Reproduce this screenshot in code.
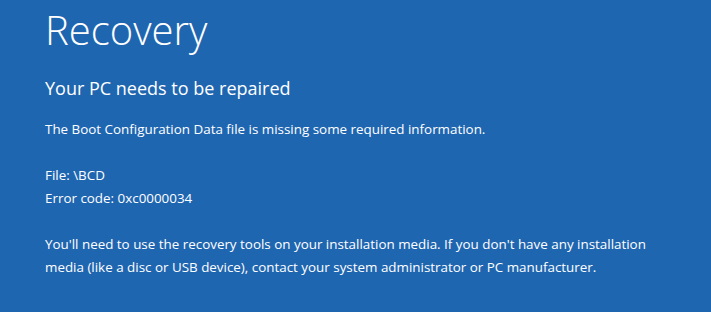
export default function App() {
  return (
    <div className="w-[711px] h-[312px] bg-[#1f66b1] text-white overflow-hidden pl-[45px]" style={{ fontFamily: '"Open Sans", "Noto Sans", sans-serif' }}>
      <div className="pt-[4px] text-[40px] leading-[52px] font-light">Recovery</div>
      <div className="mt-[19px] text-[18px] leading-[26px]">Your PC needs to be repaired</div>
      <div className="mt-[17px] text-[13.4px] leading-[23px]">The Boot Configuration Data file is missing some required information.</div>
      <div className="mt-[23px] text-[13.4px] leading-[23px]">File: \BCD</div>
      <div className="text-[13.4px] leading-[23px]">Error code: 0xc0000034</div>
      <div className="mt-[23px] text-[13.4px] leading-[23px]">You'll need to use the recovery tools on your installation media. If you don't have any installation<br />media (like a disc or USB device), contact your system administrator or PC manufacturer.</div>
    </div>
  );
}
